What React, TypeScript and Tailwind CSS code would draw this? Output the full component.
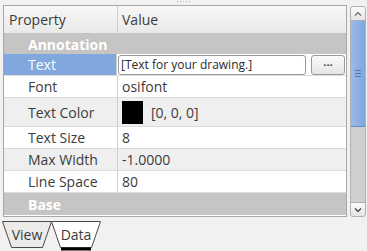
import React from 'react';

type Row =
  | { kind: 'group'; label: string; h: number }
  | { kind: 'prop'; label: string; value?: string; h: number; alt?: boolean; special?: 'text' | 'color' };

const rows: Row[] = [
  { kind: 'group', label: 'Annotation', h: 20 },
  { kind: 'prop', label: 'Text', h: 22, special: 'text' },
  { kind: 'prop', label: 'Font', value: 'osifont', h: 22 },
  { kind: 'prop', label: 'Text Color', value: '[0, 0, 0]', h: 29, alt: true, special: 'color' },
  { kind: 'prop', label: 'Text Size', value: '8', h: 22 },
  { kind: 'prop', label: 'Max Width', value: '-1.0000', h: 22, alt: true },
  { kind: 'prop', label: 'Line Space', value: '80', h: 22 },
  { kind: 'group', label: 'Base', h: 22 },
];

function Tab({ label, active }: { label: string; active?: boolean }) {
  return (
    <div className="relative w-[50px] h-[30px] flex items-center justify-center -mr-[1px]">
      <svg className="absolute inset-0" width="50" height="30" viewBox="0 0 50 30">
        <polygon
          points="0.5,0.5 49.5,0.5 40.5,26.5 9.5,26.5"
          fill={active ? '#ffffff' : '#ecebea'}
          stroke="#4a4a4a"
          strokeWidth="1"
        />
        {active && <line x1="10" y1="28" x2="40" y2="28" stroke="#000" strokeWidth="3" />}
      </svg>
      <span className="relative -mt-[3px] text-[14px] text-[#3c3c3c]">{label}</span>
    </div>
  );
}

export default function App() {
  return (
    <div
      className="w-[367px] h-[251px] bg-[#f2f1f0] flex flex-col overflow-hidden"
      style={{ fontFamily: '"Open Sans", "DejaVu Sans", sans-serif' }}
    >
      {/* grip */}
      <div className="h-[5px] flex justify-center items-start pt-[1px] gap-[2px]">
        {[0, 1, 2, 3, 4].map((i) => (
          <div key={i} className="w-[1px] h-[1px] bg-[#b5b5b5]" />
        ))}
      </div>

      <div className="flex pl-[3px] pr-[1px] h-[212px]">
        {/* table */}
        <div className="w-[345px] border border-[#a8a8a8] bg-white flex flex-col overflow-hidden">
          <div className="h-[28px] shrink-0 flex bg-gradient-to-b from-[#f7f7f7] to-[#e9e9e9] border-b border-[#c4c4c4] text-[14px] text-[#3c3c3c]">
            <div className="w-[114px] pl-[5px] flex items-center border-r border-[#cfcfcf]">Property</div>
            <div className="flex-1 pl-[4px] flex items-center">Value</div>
          </div>
          {rows.map((r, i) =>
            r.kind === 'group' ? (
              <div
                key={i}
                className="shrink-0 bg-[#c6c5c3] pl-[24px] flex items-center text-[14px] font-bold text-white"
                style={{ height: r.h }}
              >
                {r.label}
              </div>
            ) : (
              <div
                key={i}
                className={`shrink-0 flex border-b border-[#dcdcdc] ${r.alt ? 'bg-[#efefef]' : 'bg-white'}`}
                style={{ height: r.h }}
              >
                <div
                  className={`w-[114px] pl-[24px] flex items-center border-r border-[#cfcfcf] text-[14px] ${
                    r.special === 'text' ? 'bg-[#80a8dc] text-white' : 'text-[#3c3c3c]'
                  }`}
                >
                  {r.label}
                </div>
                {r.special === 'text' ? (
                  <div className="flex-1 flex items-center gap-[5px] pl-[1px] pr-[1px] bg-white">
                    <div className="w-[188px] h-[20px] border border-[#9a9a9a] rounded-[3px] bg-white pl-[2px] flex items-center text-[12px] text-[#2a2a2a]">
                      [Text for your drawing.]
                    </div>
                    <div className="w-[34px] h-[20px] border border-[#9a9a9a] rounded-[3px] bg-gradient-to-b from-[#fbfbfb] to-[#e6e6e6] flex items-center justify-center text-[11px] font-bold text-[#3c3c3c] pb-[4px]">
                      ...
                    </div>
                  </div>
                ) : r.special === 'color' ? (
                  <div className="flex-1 flex items-center pl-[4px] gap-[8px] text-[14px] text-[#3c3c3c]">
                    <div className="w-[21px] h-[23px] bg-black" />
                    {r.value}
                  </div>
                ) : (
                  <div className="flex-1 flex items-center pl-[4px] text-[14px] text-[#3c3c3c]">{r.value}</div>
                )}
              </div>
            )
          )}
        </div>

        {/* scrollbar */}
        <div className="ml-[3px] w-[16px] flex flex-col border border-[#b0b0b0] rounded-[3px] bg-[#cfcfcd] overflow-hidden mt-[1px]">
          <div className="h-[14px] bg-gradient-to-b from-[#fafafa] to-[#e4e4e4] border-b border-[#b0b0b0] flex items-center justify-center">
            <svg width="8" height="6" viewBox="0 0 8 6">
              <path d="M1 4.5 L4 1.5 L7 4.5" fill="none" stroke="#6a6a6a" strokeWidth="1.2" />
            </svg>
          </div>
          <div className="h-[106px] bg-gradient-to-r from-[#9bbbe6] to-[#7ea6dc] border-b border-[#5f8cc9] flex items-center justify-center">
            <div className="flex flex-col gap-[2px]">
              <div className="w-[6px] h-[1px] bg-[#4f78b0]" />
              <div className="w-[6px] h-[1px] bg-[#4f78b0]" />
              <div className="w-[6px] h-[1px] bg-[#4f78b0]" />
            </div>
          </div>
          <div className="flex-1" />
          <div className="h-[14px] bg-gradient-to-b from-[#fafafa] to-[#e4e4e4] border-t border-[#b0b0b0] flex items-center justify-center">
            <svg width="8" height="6" viewBox="0 0 8 6">
              <path d="M1 1.5 L4 4.5 L7 1.5" fill="none" stroke="#3a3a3a" strokeWidth="1.2" />
            </svg>
          </div>
        </div>
      </div>

      {/* tabs */}
      <div className="flex pl-[2px] pt-[4px]">
        <Tab label="View" />
        <Tab label="Data" active />
      </div>
    </div>
  );
}
